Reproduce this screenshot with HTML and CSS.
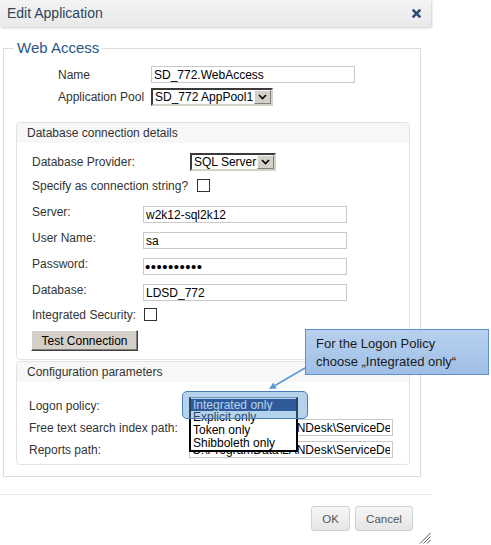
FILE: index.html
```html
<!DOCTYPE html>
<html>
<head>
<meta charset="utf-8">
<title>Edit Application</title>
<link rel="stylesheet" href="styles.css">
</head>
<body>
<div class="dialog">
  <div class="titlebar">
    <span class="title">Edit Application</span>
    <svg class="close" width="9" height="9" viewBox="0 0 9 9"><path d="M1.6 1.6 L7.4 7.4 M7.4 1.6 L1.6 7.4" stroke="#2b4a78" stroke-width="2.6" stroke-linecap="square"/></svg>
  </div>
  <div class="content">
    <fieldset class="group">
      <legend>Web Access</legend>
      <div class="wa-row row-name"><label>Name</label><input class="text" type="text" value="SD_772.WebAccess"></div>
      <div class="wa-row row-pool"><label>Application Pool</label>
        <div class="combo pool"><span class="combo-text">SD_772 AppPool1</span><span class="combo-btn"><svg width="9" height="6" viewBox="0 0 9 6"><path d="M1 1 L4.5 4.5 L8 1" fill="none" stroke="#000" stroke-width="1.6"/></svg></span></div>
      </div>

      <section class="panel db">
        <div class="panel-head">Database connection details</div>
        <div class="panel-body">
          <div class="field prov"><label>Database Provider:</label>
            <div class="combo provider"><span class="combo-text">SQL Server</span><span class="combo-btn"><svg width="9" height="6" viewBox="0 0 9 6"><path d="M1 1 L4.5 4.5 L8 1" fill="none" stroke="#000" stroke-width="1.6"/></svg></span></div>
          </div>
          <div class="field specify"><label>Specify as connection string?</label><input class="check" type="checkbox"></div>
          <div class="db-text server"><label>Server:</label><input class="text" type="text" value="w2k12-sql2k12"></div>
          <div class="db-text"><label>User Name:</label><input class="text" type="text" value="sa"></div>
          <div class="db-text"><label>Password:</label><input class="text pw" type="password" value="abcdefghij"></div>
          <div class="db-text"><label>Database:</label><input class="text" type="text" value="LDSD_772"></div>
          <div class="field integrated"><label>Integrated Security:</label><input class="check" type="checkbox"></div>
          <button class="test" type="button">Test Connection</button>
        </div>
      </section>

      <section class="panel cfg">
        <div class="panel-head">Configuration parameters</div>
        <div class="panel-body">
          <div class="field logon"><label>Logon policy:</label>
            <div class="combo policy"></div>
          </div>
          <div class="field path"><label>Free text search index path:</label><input class="text" type="text" value="C:\ProgramData\LANDesk\ServiceDesk\Index"></div>
          <div class="field path"><label>Reports path:</label><input class="text" type="text" value="C:\ProgramData\LANDesk\ServiceDesk\Reports"></div>
        </div>
      </section>
    </fieldset>
  </div>
  <div class="footer">
    <button class="btn ok" type="button">OK</button>
    <button class="btn cancel" type="button">Cancel</button>
  </div>

  <svg class="grip" width="12" height="12" viewBox="0 0 12 12"><path d="M1 11.5 L11.5 1 M4.5 11.5 L11.5 4.5 M8 11.5 L11.5 8" stroke="#555" stroke-width="1"/></svg>

  <ul class="droplist">
    <li class="sel">Integrated only</li>
    <li>Explicit only</li>
    <li>Token only</li>
    <li>Shibboleth only</li>
  </ul>
  <div class="highlight"></div>

  <div class="callout">For the Logon Policy<br>choose „Integrated only“</div>
  <svg class="pointer" width="45" height="30" viewBox="0 0 45 30"><path d="M40 6 L10 23.5" stroke="#5b9bd5" stroke-width="1.6" fill="none"/><path d="M4 27 L11.8 26.5 L8.3 20.4 Z" fill="#5b9bd5"/></svg>
</div>
</body>
</html>
```
FILE: styles.css
```css
* { box-sizing: border-box; }
html, body { margin: 0; background: #fff; }
body {
  font-family: "Liberation Sans", Arial, sans-serif;
  font-size: 12px;
  color: #333;
}
.dialog {
  position: relative;
  width: 431px;
  height: 545px;
}
.titlebar {
  height: 27px;
  display: flex;
  align-items: center;
  justify-content: space-between;
  padding: 0 10px 0 7px;
  background: linear-gradient(#f3f3f3, #e9e9e9);
  box-shadow: 1px 1px 2px rgba(0, 0, 0, .2);
}
.title {
  font-size: 14px;
  line-height: 27px;
  color: #2e4560;
}
.close { display: block; }
.content { padding: 0 0 17px 0; }
.group {
  margin: 11px 0 0 3px;
  width: 418px;
  min-width: 0;
  border: 1px solid #dcdcdc;
  padding: 0 0 11px 0;
}
.group legend {
  font-size: 15px;
  line-height: 20px;
  color: #2b5587;
  padding: 0 3px;
  margin-left: 10px;
}
.wa-row {
  display: flex;
  align-items: center;
  padding-left: 54px;
}
.wa-row label { width: 93px; }
.row-name { margin-top: 8px; }
.row-pool { margin-top: 5px; }

.text {
  display: block;
  width: 204px;
  height: 17px;
  margin: 0;
  border: 1px solid #c9c9c9;
  padding: 0 2px;
  font: 12px "Liberation Sans", Arial, sans-serif;
  color: #000;
  background: #fff;
  outline: none;
}
.pw { font-size: 15px; letter-spacing: 0.5px; padding-left: 1px; }

.combo {
  display: flex;
  align-items: center;
  height: 18px;
  border: 2px solid;
  border-color: #3a3a3a #d4d0c8 #d4d0c8 #3a3a3a;
  background: #fff;
}
.combo-text {
  flex: 1;
  padding-left: 2px;
  color: #000;
  white-space: nowrap;
  overflow: hidden;
}
.combo-btn {
  width: 17px;
  height: 14px;
  background: #d4d0c8;
  border: 1px solid;
  border-color: #f4f4f4 #808080 #808080 #f4f4f4;
  display: flex;
  align-items: center;
  justify-content: center;
}
.pool { width: 122px; }
.provider { width: 86px; }
.policy { width: 109px; height: 17px; }

.panel {
  margin-left: 12px;
  width: 394px;
  border: 1px solid #e3e3e3;
  border-radius: 4px;
  background: #fff;
}
.panel-head {
  height: 20px;
  line-height: 20px;
  padding-left: 10px;
  background: #f7f7f7;
  color: #333;
  border-radius: 4px 4px 0 0;
}
.db { margin-top: 16px; }
.cfg { margin-top: 1px; }
.db .panel-body { padding: 10px 0 8px 15px; }
.cfg .panel-body { padding: 15px 0 6px 12px; }

.field { display: flex; align-items: center; }
.prov label { width: 158px; }
.specify { margin-top: 8px; height: 13px; }
.integrated { margin-top: 7px; height: 13px; }
.check {
  -webkit-appearance: none;
  appearance: none;
  width: 13px;
  height: 13px;
  margin: 0 0 0 8px;
  border: 1px solid #333;
  background: #fff;
}
.specify .check { margin-left: 9px; }
.db-text {
  display: flex;
  align-items: flex-start;
  margin-top: 9px;
}
.db-text label { width: 111px; line-height: 12px; }
.server { margin-top: 14px; }
.test {
  display: block;
  margin: 9px 0 0 -1px;
  width: 107px;
  height: 21px;
  padding: 0;
  background: #d4d0c8;
  border: 1px solid;
  border-color: #fff #404040 #404040 #fff;
  box-shadow: inset -1px -1px #808080;
  font: 12px "Liberation Sans", Arial, sans-serif;
  color: #000;
}

.cfg label { width: 160px; }
.logon { height: 17px; }
.path { margin-top: 5px; }

.footer {
  display: flex;
  justify-content: flex-end;
  gap: 5px;
  border-top: 1px solid #e6e6e6;
  padding: 11px 18px 0 0;
}
.btn {
  height: 25px;
  padding: 0;
  border: 1px solid #d0d0d0;
  border-radius: 3px;
  background: linear-gradient(#f6f6f6, #e5e5e5);
  font: 11.5px "Liberation Sans", Arial, sans-serif;
  color: #555;
}
.ok { width: 39px; }
.cancel { width: 58px; }

.grip { position: absolute; left: 419px; top: 532px; }

.droplist {
  position: absolute;
  left: 189px;
  top: 397px;
  width: 109px;
  height: 55px;
  margin: 0;
  padding: 1px 0 0 0;
  list-style: none;
  background: #fff;
  border: 2px solid #000;
  border-top: 1px solid #8a8a8a;
}
.droplist li {
  height: 13px;
  line-height: 13px;
  padding-left: 2px;
  color: #000;
  white-space: nowrap;
}
.droplist li.sel { background: #0a246a; color: #fff; height: 12px; line-height: 12px; }

.highlight {
  position: absolute;
  left: 182px;
  top: 391px;
  width: 126px;
  height: 28px;
  border: 1px solid #4a7ebb;
  border-radius: 5px;
  background: rgba(91, 155, 213, .45);
}

.callout {
  position: absolute;
  left: 305px;
  top: 329px;
  width: 184px;
  height: 46px;
  padding: 5px 0 0 10px;
  border: 1px solid #5f8fcc;
  background: linear-gradient(#b7d0ee, #a0bfe6);
  font-size: 13px;
  line-height: 18px;
  color: #1a1a1a;
}
.pointer { position: absolute; left: 265px; top: 362px; }
```
